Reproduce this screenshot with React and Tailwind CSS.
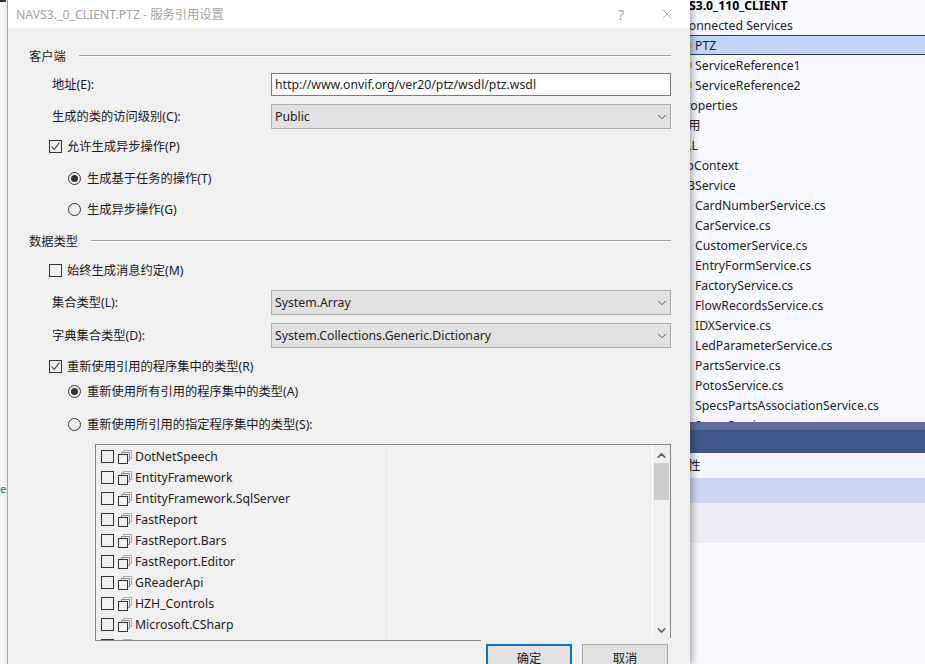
import React from "react";
import { ChevronDown, ChevronUp, X } from "lucide-react";

const font = "font-['Noto_Sans','Noto_Sans_CJK_SC',sans-serif]";

const assemblies = [
  "DotNetSpeech",
  "EntityFramework",
  "EntityFramework.SqlServer",
  "FastReport",
  "FastReport.Bars",
  "FastReport.Editor",
  "GReaderApi",
  "HZH_Controls",
  "Microsoft.CSharp",
  "Microsoft.Office",
];

const services = [
  "CardNumberService.cs",
  "CarService.cs",
  "CustomerService.cs",
  "EntryFormService.cs",
  "FactoryService.cs",
  "FlowRecordsService.cs",
  "IDXService.cs",
  "LedParameterService.cs",
  "PartsService.cs",
  "PotosService.cs",
  "SpecsPartsAssociationService.cs",
  "SpareService.cs",
];

const Section = ({ title, className }) => (
  <div className={`flex items-center h-[20px] pl-[21px] pr-[19px] ${className}`}>
    <span className="text-[#1a1a1a] mr-[13px]">{title}</span>
    <div className="flex-1 border-t border-[#a0a0a0] border-b-white border-b h-[2px]" />
  </div>
);

const Check = ({ checked }) => (
  <span className="w-[13px] h-[13px] border border-[#333] bg-[#f0f0f0] shrink-0 flex items-center justify-center">
    {checked && (
      <svg width="11" height="11" viewBox="0 0 11 11" fill="none">
        <path d="M1.5 5.5 L4.2 8.5 L9.5 1.5" stroke="#333" strokeWidth="1.1" />
      </svg>
    )}
  </span>
);

const CheckRow = ({ checked, label, className }) => (
  <div className={`flex items-center h-[20px] pl-[41px] gap-[5px] text-[#1a1a1a] ${className}`}>
    <Check checked={checked} />
    <span>{label}</span>
  </div>
);

const RadioRow = ({ checked, label, className }) => (
  <div className={`flex items-center h-[20px] pl-[60px] gap-[6px] text-[#1a1a1a] ${className}`}>
    <span className="w-[13px] h-[13px] rounded-full border border-[#333] shrink-0 flex items-center justify-center">
      {checked && <span className="w-[7px] h-[7px] rounded-full bg-[#333]" />}
    </span>
    <span>{label}</span>
  </div>
);

const SelectRow = ({ label, value, className }) => (
  <div className={`flex items-center h-[25px] pl-[44px] pr-[19px] ${className}`}>
    <span className="w-[219px] text-[#1a1a1a]">{label}</span>
    <div className="flex-1 h-full flex items-center justify-between bg-[#e1e1e1] border border-[#adadad] pl-[3px] pr-[1px]">
      <span>{value}</span>
      <ChevronDown size={14} strokeWidth={1.4} className="text-[#333]" />
    </div>
  </div>
);

const AssemblyIcon = () => (
  <svg width="14" height="14" viewBox="0 0 14 14" fill="none" className="shrink-0 block">
    <path d="M5.5 2.5 V0.5 H13.5 V8.5 H11" stroke="#aaa" />
    <path d="M3.5 4 V2.5 H11.5 V10.5 H10" stroke="#888" />
    <rect x="0.5" y="4.5" width="9" height="9" stroke="#333" fill="#f0f0f0" />
  </svg>
);

const TreeRow = ({ children, selected, bold, warn, inset, clip }) => (
  <div
    className={`flex items-center h-[20px] overflow-hidden whitespace-nowrap ${
      selected ? "bg-[#c3d5fb] border-y border-[#1f3f7f]" : ""
    } ${bold ? "font-bold text-black" : ""}`}
  >
    {warn && <span className="w-[2px] h-[6px] bg-[#e0b860] shrink-0" />}
    <span className={inset ? (warn ? "ml-[3px]" : "ml-[5px]") : clip}>{children}</span>
  </div>
);

export default function App() {
  return (
    <div className={`${font} flex w-[925px] h-[664px] overflow-hidden text-[12.25px] leading-[17px] text-[#1e1e1e] bg-[#f7f9fe]`}>
      {/* window behind the dialog, left edge */}
      <div className="w-[7px] bg-[#f5f5f5] shrink-0 flex flex-col overflow-hidden">
        <div className="h-[2px] w-[6px] bg-[#333]" />
        <span className="mt-[478px] text-[11px] text-[#0f7a7a]">e:</span>
      </div>

      <div className="w-[683px] shrink-0 border-l border-[#a8a8a8] bg-[#f0f0f0] relative z-10 shadow-[3px_0_6px_rgba(0,0,0,0.3)]">
        <div className="h-[28px] bg-white flex items-center pl-[8px] text-[#a3a3a3]">
          <span>NAVS3._0_CLIENT.PTZ - 服务引用设置</span>
          <span className="ml-auto text-[14px] mr-[35px]">?</span>
          <X size={16} strokeWidth={1} className="mr-[15px] text-[#8a8a8a]" />
        </div>

        <Section title="客户端" className="mt-[18px]" />

        <div className="flex items-center h-[23px] mt-[7px] pl-[44px] pr-[19px]">
          <span className="w-[219px] text-[#1a1a1a]">地址(E):</span>
          <div className="flex-1 h-full flex items-center bg-white border border-[#7a7a7a] pl-[3px]">
            http://www.onvif.org/ver20/ptz/wsdl/ptz.wsdl
          </div>
        </div>

        <SelectRow label="生成的类的访问级别(C):" value="Public" className="mt-[8px]" />
        <CheckRow checked label="允许生成异步操作(P)" className="mt-[7px]" />
        <RadioRow checked label="生成基于任务的操作(T)" className="mt-[12px]" />
        <RadioRow label="生成异步操作(G)" className="mt-[11px]" />

        <Section title="数据类型" className="mt-[12px]" />

        <CheckRow label="始终生成消息约定(M)" className="mt-[9px]" />
        <SelectRow label="集合类型(L):" value="System.Array" className="mt-[10px]" />
        <SelectRow label="字典集合类型(D):" value="System.Collections.Generic.Dictionary" className="mt-[8px]" />
        <CheckRow checked label="重新使用引用的程序集中的类型(R)" className="mt-[8px]" />
        <RadioRow checked label="重新使用所有引用的程序集中的类型(A)" className="mt-[5px]" />
        <RadioRow label="重新使用所引用的指定程序集中的类型(S):" className="mt-[13px]" />

        <div className="relative ml-[87px] w-[576px] h-[197px] mt-[10px] border border-[#828790] flex">
          <div className="w-[291px] border-r border-[#dfe7ef] pl-[5px] pt-[1px] overflow-hidden">
            {assemblies.map((name) => (
              <div key={name} className="flex items-center h-[21px]">
                <Check />
                <span className="ml-[4px]"><AssemblyIcon /></span>
                <span className="ml-[3px]">{name}</span>
              </div>
            ))}
          </div>
          <div className="ml-auto w-[17px] mr-px border-l border-white flex flex-col items-center h-[193px] text-[#606060]">
            <ChevronUp size={13} strokeWidth={3} className="mt-[4px]" />
            <div className="w-[15px] h-[37px] bg-[#cdcdcd] mt-[1px]" />
            <ChevronDown size={13} strokeWidth={3} className="mt-auto mb-[1px]" />
          </div>
          <div className="absolute right-[-1px] bottom-[-1px] w-[190px] h-[3px] bg-[#f0f0f0]" />
        </div>

        <div className="flex justify-end gap-[10px] mt-[3px] pr-[22px]">
          <button className="w-[86px] h-[28px] border-2 border-[#0078d7] bg-[#e1e1e1] text-[#1a1a1a]">确定</button>
          <button className="w-[86px] h-[28px] border border-[#adadad] bg-[#e1e1e1] text-[#1a1a1a]">取消</button>
        </div>
      </div>

      {/* solution explorer */}
      <div className="flex-1 min-w-0 flex flex-col">
        <div className="h-[422px] overflow-hidden shrink-0">
          <div className="-mt-[5px]">
            <TreeRow bold clip="-ml-[27px]">NAVS3.0_110_CLIENT</TreeRow>
            <TreeRow clip="-ml-[9px]">Connected Services</TreeRow>
            <TreeRow selected warn inset>PTZ</TreeRow>
            <TreeRow warn inset>ServiceReference1</TreeRow>
            <TreeRow warn inset>ServiceReference2</TreeRow>
            <TreeRow clip="-ml-[12px]">Properties</TreeRow>
            <TreeRow clip="-ml-[14px]">引用</TreeRow>
            <TreeRow clip="-ml-[13px]">BLL</TreeRow>
            <TreeRow clip="-ml-[19px]">AppContext</TreeRow>
            <TreeRow clip="-ml-[12px]">DBService</TreeRow>
            {services.map((name) => (
              <TreeRow key={name} inset>{name}</TreeRow>
            ))}
          </div>
        </div>
        <div className="h-[8px] bg-[#5f6f9a]" />
        <div className="h-[23px] bg-[#40568c]" />
        <div className="h-[25px] bg-[#f3f6fd] flex items-center overflow-hidden">
          <span className="-ml-[14px] whitespace-nowrap">属性</span>
        </div>
        <div className="h-[25px] bg-[#cdd6f0]" />
        <div className="h-[40px] bg-[#eeeef2]" />
      </div>
    </div>
  );
}
